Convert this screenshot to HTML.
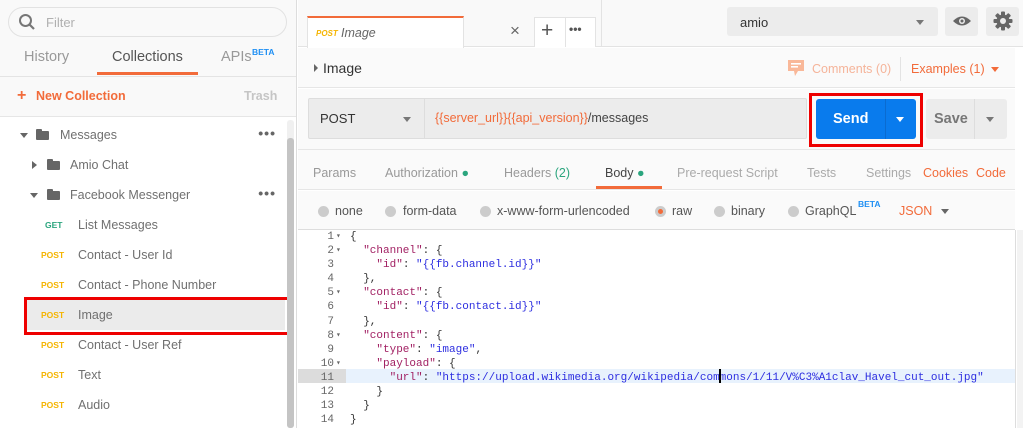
<!DOCTYPE html>
<html><head><meta charset="utf-8"><style>
*{box-sizing:border-box;margin:0;padding:0}
body{width:1023px;height:428px;overflow:hidden;background:#fff;font-family:"Liberation Sans",sans-serif;font-size:13px;color:#505050;position:relative;white-space:nowrap}
.a{position:absolute}
.side{left:0;top:0;width:297px;height:428px;background:#fff;border-right:1px solid #ddd}
.sh{left:0;top:0;width:296px;height:117px;background:#f9f9f9;border-bottom:1px solid #e6e6e6}
.filter{left:8px;top:7px;width:279px;height:30px;border:1px solid #e2e2e2;border-radius:15px;background:#f9f9f9;color:#b0b0b0;padding:7px 0 0 37px;font-size:13px}
.row{position:absolute;left:0;width:286px;height:30px;line-height:30px;font-size:12.5px;color:#707070}
.m{position:absolute;font-size:8.5px;font-weight:bold;color:#f5b400;left:41px}
.g{color:#2ba57e;left:45px}
.dots{position:absolute;right:10px;top:0;letter-spacing:1px;color:#666;font-weight:bold;font-size:14px;line-height:26px}
.fold{position:absolute;width:13px;height:9px;top:11px;background:#666;border-radius:1px}
.fold:before{content:"";position:absolute;left:0;top:-2px;width:6px;height:3px;background:#666;border-radius:1px 1px 0 0}
.tri{position:absolute;width:0;height:0}
.code{font-family:"Liberation Mono",monospace;font-size:11px;line-height:14.1px}
.k{color:#a11f62}.s{color:#2d2ee0}
</style></head><body>
<div class="a side"></div>
<div class="a sh"></div>
<div class="a filter">Filter</div>
<svg class="a" style="left:18px;top:13px" width="18" height="18"><circle cx="7.5" cy="7.5" r="5.5" fill="none" stroke="#777" stroke-width="2"/><line x1="11.5" y1="11.5" x2="16" y2="16" stroke="#777" stroke-width="2.2"/></svg>
<div class="a" style="left:24px;top:49px;font-size:14.5px;color:#999">History</div>
<div class="a" style="left:112px;top:49px;font-size:14.5px;color:#555">Collections</div>
<div class="a" style="left:221px;top:49px;font-size:14.5px;color:#999">APIs</div>
<div class="a" style="left:252px;top:47px;font-size:8.5px;font-weight:bold;color:#1f8ff3">BETA</div>
<div class="a" style="left:97px;top:72px;width:101px;height:3px;background:#f26b3a"></div>
<div class="a" style="left:0;top:76px;width:296px;height:1px;background:#e4e4e4"></div>
<div class="a" style="left:17px;top:87px;font-size:16px;color:#f26b3a;font-weight:bold">+</div>
<div class="a" style="left:36px;top:89px;font-size:12.5px;color:#f26b3a;font-weight:bold">New Collection</div>
<div class="a" style="left:244px;top:89px;font-size:12.5px;color:#c5c5c5;font-weight:bold">Trash</div>
<div class="row" style="top:120px"><div class="tri" style="left:20px;top:13px;border-left:4px solid transparent;border-right:4px solid transparent;border-top:5px solid #666"></div><div class="fold" style="left:36px"></div><span style="position:absolute;left:60px">Messages</span><span class="dots">•••</span></div>
<div class="row" style="top:150px"><div class="tri" style="left:32px;top:11px;border-top:4px solid transparent;border-bottom:4px solid transparent;border-left:5px solid #666"></div><div class="fold" style="left:47px"></div><span style="position:absolute;left:70px">Amio Chat</span></div>
<div class="row" style="top:180px"><div class="tri" style="left:30px;top:13px;border-left:4px solid transparent;border-right:4px solid transparent;border-top:5px solid #666"></div><div class="fold" style="left:47px"></div><span style="position:absolute;left:70px">Facebook Messenger</span><span class="dots">•••</span></div>
<div class="row" style="top:210px"><span class="m g">GET</span><span style="position:absolute;left:78px">List Messages</span></div>
<div class="row" style="top:240px"><span class="m">POST</span><span style="position:absolute;left:78px">Contact - User Id</span></div>
<div class="row" style="top:270px"><span class="m">POST</span><span style="position:absolute;left:78px">Contact - Phone Number</span></div>
<div class="row" style="top:300px;left:26px;width:259px;background:#ebebeb"></div>
<div class="row" style="top:300px"><span class="m">POST</span><span style="position:absolute;left:78px">Image</span></div>
<div class="a" style="left:24px;top:297px;width:267px;height:38px;border:3px solid #e00"></div>
<div class="row" style="top:330px"><span class="m">POST</span><span style="position:absolute;left:78px">Contact - User Ref</span></div>
<div class="row" style="top:360px"><span class="m">POST</span><span style="position:absolute;left:78px">Text</span></div>
<div class="row" style="top:390px"><span class="m">POST</span><span style="position:absolute;left:78px">Audio</span></div>
<div class="a" style="left:287px;top:120px;width:7px;height:308px;background:#f0f0f0;border-radius:3px"></div>
<div class="a" style="left:287px;top:138px;width:7px;height:290px;background:#c4c4c4;border-radius:3px"></div>

<div class="a" style="left:298px;top:0;width:725px;height:47px;background:#f9f9f9;border-bottom:1px solid #e3e3e3"></div>
<div class="a" style="left:307px;top:16px;width:157px;height:32px;background:#fff;border:1px solid #e3e3e3;border-top:2px solid #f26b3a;border-bottom:none"></div>
<div class="a" style="left:316px;top:29px;font-size:8px;font-weight:bold;font-style:italic;color:#f5b400">POST</div>
<div class="a" style="left:341px;top:26px;font-size:12.5px;font-style:italic;color:#666">Image</div>
<div class="a" style="left:510px;top:21px;font-size:17px;color:#666">×</div>
<div class="a" style="left:534px;top:17px;width:62px;height:30px;background:#fff;border:1px solid #e3e3e3;border-bottom:none"></div>
<div class="a" style="left:565px;top:17px;width:1px;height:30px;background:#e3e3e3"></div>
<div class="a" style="left:541px;top:19px;font-size:21px;color:#555">+</div>
<div class="a" style="left:569px;top:22px;font-size:12px;color:#555;font-weight:bold">•••</div>
<div class="a" style="left:601px;top:0;width:1px;height:47px;background:#e3e3e3"></div>
<div class="a" style="left:727px;top:7px;width:211px;height:29px;background:#ececec;border-radius:3px"></div>
<div class="a" style="left:740px;top:15px;font-size:13px;color:#333">amio</div>
<div class="a" style="left:916px;top:20px;width:0;height:0;border-left:4px solid transparent;border-right:4px solid transparent;border-top:5px solid #777"></div>
<div class="a" style="left:945px;top:7px;width:33px;height:29px;background:#ececec;border-radius:3px"></div>
<svg class="a" style="left:952px;top:14px" width="20" height="14"><path d="M1 7 Q10 -2 19 7 Q10 16 1 7Z" fill="#666"/><circle cx="10" cy="7" r="3" fill="#ececec"/><circle cx="10" cy="7" r="1.5" fill="#666"/></svg>
<div class="a" style="left:986px;top:7px;width:33px;height:29px;background:#ececec;border-radius:3px"></div>
<svg class="a" style="left:993px;top:11px" width="20" height="20" viewBox="0 0 20 20"><g fill="#666"><circle cx="10" cy="10" r="6.5"/><rect x="8" y="0.5" width="4" height="19" rx="1"/><rect x="8" y="0.5" width="4" height="19" rx="1" transform="rotate(45 10 10)"/><rect x="8" y="0.5" width="4" height="19" rx="1" transform="rotate(90 10 10)"/><rect x="8" y="0.5" width="4" height="19" rx="1" transform="rotate(135 10 10)"/></g><circle cx="10" cy="10" r="3" fill="#ececec"/></svg>

<div class="a" style="left:298px;top:48px;width:717px;height:40px;background:#fafafa;border-bottom:1px solid #e6e6e6"></div>
<div class="a" style="left:314px;top:64px;width:0;height:0;border-top:4px solid transparent;border-bottom:4px solid transparent;border-left:4px solid #666"></div>
<div class="a" style="left:323px;top:60px;font-size:14px;color:#333">Image</div>
<svg class="a" style="left:787px;top:59px" width="18" height="19"><path d="M1 1h16v11h-6l-3 5-1-5H1z" fill="#f9b899"/><rect x="4" y="4" width="10" height="1.6" fill="#fff"/><rect x="4" y="7" width="7" height="1.6" fill="#fff"/></svg>
<div class="a" style="left:812px;top:62px;font-size:12.5px;color:#f5b49a">Comments (0)</div>
<div class="a" style="left:900px;top:57px;width:1px;height:24px;background:#e3e3e3"></div>
<div class="a" style="left:911px;top:62px;font-size:12.5px;color:#f26b3a">Examples (1)</div>
<div class="a" style="left:991px;top:67px;width:0;height:0;border-left:4px solid transparent;border-right:4px solid transparent;border-top:5px solid #f26b3a"></div>

<div class="a" style="left:298px;top:89px;width:717px;height:60px;background:#fafafa"></div>
<div class="a" style="left:308px;top:98px;width:499px;height:41px;background:#ececec;border:1px solid #ddd;border-radius:2px"></div>
<div class="a" style="left:424px;top:98px;width:1px;height:41px;background:#ddd"></div>
<div class="a" style="left:320px;top:111px;font-size:13px;color:#333">POST</div>
<div class="a" style="left:403px;top:117px;width:0;height:0;border-left:4px solid transparent;border-right:4px solid transparent;border-top:5px solid #777"></div>
<div class="a" style="left:435px;top:111px;font-size:12.5px;color:#f26b3a">{{server_url}}{{api_version}}<span style="color:#444">/messages</span></div>
<div class="a" style="left:809px;top:93px;width:114px;height:54px;border:3px solid #e00"></div>
<div class="a" style="left:816px;top:99px;width:100px;height:40px;background:#097bed;border-radius:3px"></div>
<div class="a" style="left:885px;top:99px;width:1px;height:40px;background:#0a6bd0"></div>
<div class="a" style="left:833px;top:111px;font-size:14.5px;color:#fff;font-weight:bold">Send</div>
<div class="a" style="left:896px;top:117px;width:0;height:0;border-left:4px solid transparent;border-right:4px solid transparent;border-top:5px solid #fff"></div>
<div class="a" style="left:926px;top:99px;width:81px;height:40px;background:#ececec;border-radius:3px"></div>
<div class="a" style="left:974px;top:99px;width:1px;height:40px;background:#ddd"></div>
<div class="a" style="left:934px;top:111px;font-size:14.5px;color:#777;font-weight:bold">Save</div>
<div class="a" style="left:986px;top:117px;width:0;height:0;border-left:4px solid transparent;border-right:4px solid transparent;border-top:5px solid #777"></div>

<div class="a" style="left:298px;top:149px;width:717px;height:41px;background:#fafafa;border-top:1px solid #e6e6e6;border-bottom:1px solid #e6e6e6"></div>
<div class="a" style="left:313px;top:166px;font-size:12.5px;color:#999">Params</div>
<div class="a" style="left:385px;top:166px;font-size:12.5px;color:#999">Authorization <span style="color:#2ba57e">●</span></div>
<div class="a" style="left:504px;top:166px;font-size:12.5px;color:#999">Headers <span style="color:#2ba57e">(2)</span></div>
<div class="a" style="left:605px;top:166px;font-size:12.5px;color:#444">Body <span style="color:#2ba57e">●</span></div>
<div class="a" style="left:596px;top:186px;width:66px;height:3px;background:#f26b3a"></div>
<div class="a" style="left:677px;top:166px;font-size:12.5px;color:#aaa">Pre-request Script</div>
<div class="a" style="left:807px;top:166px;font-size:12.5px;color:#aaa">Tests</div>
<div class="a" style="left:866px;top:166px;font-size:12.5px;color:#aaa">Settings</div>
<div class="a" style="left:923px;top:166px;font-size:12.5px;color:#f26b3a">Cookies</div>
<div class="a" style="left:976px;top:166px;font-size:12.5px;color:#f26b3a">Code</div>

<div class="a" style="left:298px;top:191px;width:717px;height:39px;background:#fafafa;border-bottom:1px solid #ddd"></div>
<div style="position:absolute;top:204px;left:0;font-size:12.5px;color:#555">
<span class="a" style="left:318px;top:2px;width:11px;height:11px;border-radius:50%;background:#ccc"></span><span class="a" style="left:335px;top:0">none</span>
<span class="a" style="left:385px;top:2px;width:11px;height:11px;border-radius:50%;background:#ccc"></span><span class="a" style="left:403px;top:0">form-data</span>
<span class="a" style="left:480px;top:2px;width:11px;height:11px;border-radius:50%;background:#ccc"></span><span class="a" style="left:497px;top:0">x-www-form-urlencoded</span>
<span class="a" style="left:655px;top:2px;width:11px;height:11px;border-radius:50%;background:#ccc"></span><span class="a" style="left:658px;top:5px;width:5px;height:5px;border-radius:50%;background:#f26b3a"></span><span class="a" style="left:672px;top:0">raw</span>
<span class="a" style="left:714px;top:2px;width:11px;height:11px;border-radius:50%;background:#ccc"></span><span class="a" style="left:731px;top:0">binary</span>
<span class="a" style="left:788px;top:2px;width:11px;height:11px;border-radius:50%;background:#ccc"></span><span class="a" style="left:805px;top:0">GraphQL</span>
<span class="a" style="left:858px;top:-5px;font-size:8.5px;font-weight:bold;color:#1f8ff3">BETA</span>
<span class="a" style="left:899px;top:0;color:#f26b3a">JSON</span>
<span class="a" style="left:941px;top:5px;width:0;height:0;border-left:4px solid transparent;border-right:4px solid transparent;border-top:5px solid #666"></span>
</div>

<div class="a" style="left:346px;top:369px;width:669px;height:14px;background:#e8f2fd"></div>
<div class="a" style="left:298px;top:369px;width:48px;height:14px;background:#dcdcdc"></div>
<div class="a" style="left:1015px;top:230px;width:1px;height:198px;background:#ddd"></div>
<div class="a" style="left:1017px;top:230px;width:6px;height:198px;background:#f3f3f3"></div>
<div class="a code" style="left:298px;top:230px;width:36px;text-align:right;color:#666">1<br>2<br>3<br>4<br>5<br>6<br>7<br>8<br>9<br>10<br>11<br>12<br>13<br>14</div>
<div class="a code" style="left:336px;top:230px;color:#666;font-size:8px;line-height:14.1px">▾<br>▾<br><br><br>▾<br><br><br>▾<br><br>▾</div>
<pre class="a code" style="left:350px;top:230px;color:#333">{
  <span class="k">"channel"</span>: {
    <span class="k">"id"</span>: <span class="s">"{{fb.channel.id}}"</span>
  },
  <span class="k">"contact"</span>: {
    <span class="k">"id"</span>: <span class="s">"{{fb.contact.id}}"</span>
  },
  <span class="k">"content"</span>: {
    <span class="k">"type"</span>: <span class="s">"image"</span>,
    <span class="k">"payload"</span>: {
      <span class="k">"url"</span>: <span class="s">"https://upload.wikimedia.org/wikipedia/commons/1/11/V%C3%A1clav_Havel_cut_out.jpg"</span>
    }
  }
}</pre>
<div class="a" style="left:719px;top:369px;width:2px;height:14px;background:#000"></div>
</body></html>
